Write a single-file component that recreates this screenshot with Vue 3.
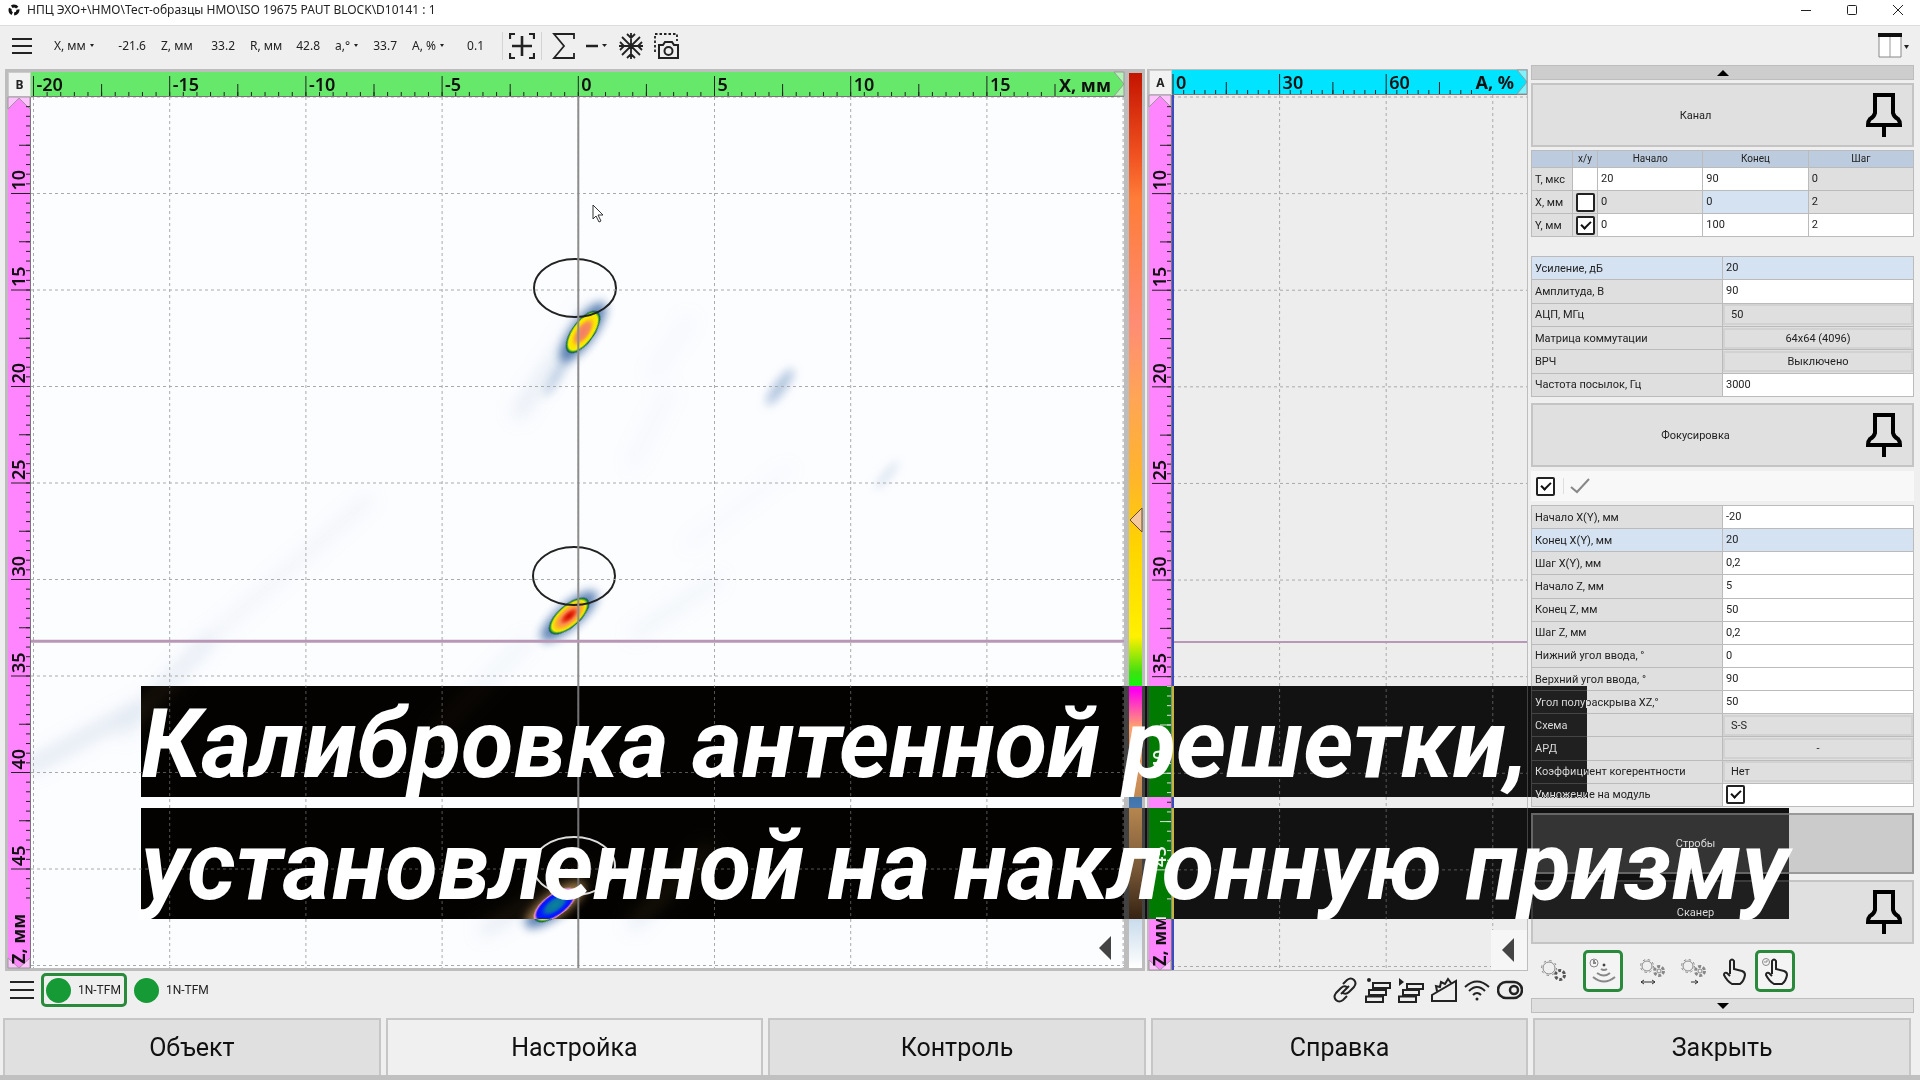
<script setup>
import { ref } from 'vue'

const readouts = ref([
  { label: 'X, мм', value: '-21.6', menu: true, size: 'w92' },
  { label: 'Z, мм', value: '33.2', menu: false, size: 'w74' },
  { label: 'R, мм', value: '42.8', menu: false, size: 'w70' },
  { label: 'a,°', value: '33.7', menu: true, size: 'w62' },
  { label: 'A, %', value: '0.1', menu: true, size: 'w72' }
])

const axes = ref([
  { id: 't', name: 'T, мкс', check: null, start: '20', end: '90', step: '0', off: ['step'] },
  { id: 'x', name: 'X, мм', check: false, start: '0', end: '0', step: '2', off: ['start', 'step'], sel: 'end' },
  { id: 'y', name: 'Y, мм', check: true, start: '0', end: '100', step: '2', off: [] }
])

const channel = ref([
  { name: 'Усиление, дБ', value: '20', type: 'text', active: true },
  { name: 'Амплитуда, В', value: '90', type: 'text' },
  { name: 'АЦП, МГц', value: '50', type: 'select' },
  { name: 'Матрица коммутации', value: '64x64 (4096)', type: 'button' },
  { name: 'ВРЧ', value: 'Выключено', type: 'button' },
  { name: 'Частота посылок, Гц', value: '3000', type: 'text' }
])

const focus = ref([
  { name: 'Начало X(Y), мм', value: '-20', type: 'text' },
  { name: 'Конец X(Y), мм', value: '20', type: 'text', active: true },
  { name: 'Шаг X(Y), мм', value: '0,2', type: 'text' },
  { name: 'Начало Z, мм', value: '5', type: 'text' },
  { name: 'Конец Z, мм', value: '50', type: 'text' },
  { name: 'Шаг Z, мм', value: '0,2', type: 'text' },
  { name: 'Нижний угол ввода, °', value: '0', type: 'text' },
  { name: 'Верхний угол ввода, °', value: '90', type: 'text' },
  { name: 'Угол полураскрыва XZ,°', value: '50', type: 'text' },
  { name: 'Схема', value: 'S-S', type: 'select' },
  { name: 'АРД', value: '-', type: 'button' },
  { name: 'Коэффициент когерентности', value: 'Нет', type: 'select' },
  { name: 'Умножение на модуль', value: true, type: 'check' }
])

const applyFocus = ref(true)
const tabs = ['Объект', 'Настройка', 'Контроль', 'Справка', 'Закрыть']
const activeTab = ref('Настройка')

function range(from, to, step) {
  const list = []
  for (let v = from; v <= to; v += step) list.push(v)
  return list
}

// axis value -> percent of the plot
const bx = v => ((v + 20) * 27.24 + 2.5) / 10.93 + '%'
const bz = v => ((v - 5) * 19.3) / 8.71 + '%'
const ax = v => (v * 3.553 + 1) / 3.55 + '%'
const az = v => ((v - 5) * 19.3 + 2) / 8.74 + '%'

const xMajor = range(-20, 15, 5)
const xMid = range(-17.5, 17.5, 5)
const xMinor = range(-19.5, 17, 0.5)
const zMajor = range(10, 45, 5)
const zMid = range(7.5, 42.5, 5)
const zMinor = range(5.5, 46.5, 0.5)
const aMajor = [0, 30, 60]
const aMid = [15, 45, 75]
const aMinor = range(3, 84, 3)

const blobs = [
  { x: 552, y: 235, angle: -54, hot: false },
  { x: 538, y: 519, angle: -41, hot: true },
  { x: 524, y: 808, angle: -36, hot: false }
]
</script>

<template>
  <div class="app">
    <header class="title">
      <svg class="logo" viewBox="0 0 12 12"><circle cx="6" cy="6" r="4" fill="none" stroke="#111" stroke-width="3" stroke-dasharray="6 2" /></svg>
      <span class="path">НПЦ ЭХО+\НМО\Тест-образцы НМО\ISO 19675 PAUT BLOCK\D10141 : 1</span>
      <div class="win">
        <button aria-label="Свернуть"><svg viewBox="0 0 12 12"><path d="M1 6.5h10" /></svg></button>
        <button aria-label="Развернуть"><svg viewBox="0 0 12 12"><rect x="1.500" y="1.500" width="9" height="9" rx="1" /></svg></button>
        <button aria-label="Выход"><svg viewBox="0 0 12 12"><path d="M1 1l10 10M11 1L1 11" /></svg></button>
      </div>
    </header>

    <div class="toolbar">
      <button class="menu" aria-label="Меню"><svg viewBox="0 0 20 18"><path d="M0 2h20M0 9h20M0 16h20" /></svg></button>
      <div class="readouts">
        <div v-for="r in readouts" :key="r.label" class="readout" :class="r.size">
          <span>{{ r.label }}<i v-if="r.menu" class="caret"></i></span>
          <span>{{ r.value }}</span>
        </div>
      </div>
      <div class="tools">
        <button class="sep" aria-label="Курсор"><svg width="26" height="28" viewBox="0 0 26 28"><path d="M1 7V2h5M20 2h5v5M25 21v5h-5M6 26H1v-5" stroke-width="2.200" /><path d="M13 4v20M3 14h20" stroke-width="2.600" /></svg></button>
        <button aria-label="Сумма"><svg width="24" height="28" viewBox="0 0 24 28"><path d="M22 7V2H2l10 12L2 26h20v-5" stroke-width="1.800" /></svg></button>
        <button aria-label="Линия"><svg width="22" height="28" viewBox="0 0 22 28"><path d="M0 14h12" stroke-width="2.500" /><path d="M16 12h5l-2.500 3z" fill="#222" stroke="none" /></svg></button>
        <button aria-label="Заморозить"><svg width="26" height="28" viewBox="0 0 26 28"><path d="M13 1v26M1 14h24M4 5l18 18M22 5L4 23M9 2l4 4 4-4M9 26l4-4 4 4M2 10l4 4-4 4M24 10l-4 4 4 4" stroke-width="1.800" /></svg></button>
        <button aria-label="Снимок"><svg width="26" height="28" viewBox="0 0 26 28"><path d="M1 20V2h22v7" stroke-dasharray="2.500 2" stroke-width="1.800" /><path d="M5 13h4l2-3h7l2 3h4v13H5z" stroke-width="2" /><circle cx="14.500" cy="19" r="4" stroke-width="2" /></svg></button>
      </div>
      <button class="layout" aria-label="Компоновка"><svg width="32" height="26" viewBox="0 0 32 26"><path d="M1 1h22v23H1z" fill="#fff" stroke="#888" /><path d="M12 3v21" stroke="#999" /><path d="M0 2h24" stroke="#111" stroke-width="4" /><path d="M26 12h5l-2.500 4z" fill="#222" stroke="none" /></svg></button>
    </div>

    <main class="main">
      <section class="work">
        <div class="views">
          <div class="frame bscan">
            <button class="corner">B</button>
            <svg class="ruler-x green">
              <line v-for="v in xMinor" :key="'n' + v" :x1="bx(v)" :x2="bx(v)" y1="20" y2="24" />
              <line v-for="v in xMid" :key="'m' + v" :x1="bx(v)" :x2="bx(v)" y1="12" y2="24" />
              <line v-for="v in xMajor" :key="'j' + v" :x1="bx(v)" :x2="bx(v)" y1="4" y2="24" />
              <svg v-for="v in xMajor" :key="v" :x="bx(v)" overflow="visible"><text x="3" y="19">{{ v }}</text></svg>
              <svg x="100%" overflow="visible"><path class="tip" d="M-10 0L0 12L-10 24H0V0z" /><text class="unit" x="-13" y="20" text-anchor="end">X, мм</text></svg>
            </svg>
            <svg class="ruler-z">
              <path class="tip" d="M0 0h22v12L11 1L0 12z" />
              <line v-for="v in zMinor" :key="'n' + v" :y1="bz(v)" :y2="bz(v)" x1="18" x2="22" />
              <line v-for="v in zMid" :key="'m' + v" :y1="bz(v)" :y2="bz(v)" x1="11" x2="22" />
              <line v-for="v in zMajor" :key="'j' + v" :y1="bz(v)" :y2="bz(v)" x1="3" x2="22" />
              <svg v-for="v in zMajor" :key="v" :y="bz(v)" overflow="visible"><text transform="rotate(-90)" x="3" y="17">{{ v }}</text></svg>
              <svg y="100%" overflow="visible"><path class="tip" d="M0 -10L11 0L22 -10V0H0z" /><text class="unit" transform="rotate(-90)" x="4" y="17">Z, мм</text></svg>
            </svg>
            <div class="plot white">
              <svg class="layer" viewBox="0 0 1093 871" preserveAspectRatio="none">
                <defs>
                  <filter id="soft" x="-50%" y="-50%" width="200%" height="200%"><feGaussianBlur stdDeviation="5" /></filter>
                  <filter id="haze" x="-50%" y="-50%" width="200%" height="200%"><feGaussianBlur stdDeviation="9" /></filter>
                  <radialGradient id="warm"><stop offset="0" stop-color="#f47a6c" /><stop offset=".4" stop-color="#f69052" /><stop offset=".65" stop-color="#ffe000" /><stop offset=".85" stop-color="#f4f000" /><stop offset=".94" stop-color="#108a30" /><stop offset="1" stop-color="#123c58" /></radialGradient>
                  <radialGradient id="hot"><stop offset="0" stop-color="#c80a00" /><stop offset=".22" stop-color="#e83010" /><stop offset=".45" stop-color="#fa8c50" /><stop offset=".65" stop-color="#ffb820" /><stop offset=".84" stop-color="#f4f000" /><stop offset=".94" stop-color="#108a30" /><stop offset="1" stop-color="#123c58" /></radialGradient>
                </defs>
                <g filter="url(#haze)" fill="none" stroke="#9db4d0">
                  <path d="M-5 672L110 610" stroke-width="10" opacity=".4" />
                  <path d="M110 610L180 540L340 400" stroke-width="9" opacity=".17" />
                  <path d="M90 640L180 540" stroke-width="14" opacity=".15" />
                  <path d="M485 320L560 210" stroke-width="12" opacity=".25" />
                  <path d="M655 450L760 370" stroke-width="7" opacity=".1" />
                  <path d="M450 835L560 770M600 830L680 750" stroke-width="10" opacity=".3" />
                  <path d="M400 640L500 540M600 540L690 480" stroke-width="10" opacity=".15" />
                  <path d="M620 280L660 220M600 370L640 290" stroke-width="12" opacity=".09" />
                </g>
                <g filter="url(#soft)">
                  <ellipse cx="749" cy="290" rx="22" ry="6" transform="rotate(-54 749 290)" fill="#7f9fc8" opacity=".6" />
                  <ellipse cx="856" cy="378" rx="18" ry="4" transform="rotate(-50 856 378)" fill="#9fb8d4" opacity=".35" />
                  <ellipse cx="527" cy="276" rx="26" ry="5" transform="rotate(-60 527 276)" fill="#7f9fc8" opacity=".45" />
                </g>
                <g v-for="b in blobs" :key="b.y" :transform="`translate(${b.x} ${b.y}) rotate(${b.angle})`">
                  <ellipse rx="36" ry="12" fill="#2c5c9c" opacity=".75" filter="url(#soft)" />
                  <ellipse rx="25" ry="11" :fill="b.hot ? 'url(#hot)' : 'url(#warm)'" />
                </g>
                <g class="marker">
                  <ellipse cx="544" cy="191" rx="41" ry="29" />
                  <ellipse cx="543" cy="479" rx="41" ry="29" />
                  <ellipse cx="543" cy="769" rx="41" ry="29" />
                </g>
              </svg>
              <svg class="layer grid">
                <line v-for="v in xMajor.concat(20)" :key="'x' + v" :x1="bx(v)" :x2="bx(v)" y1="0" y2="100%" />
                <line v-for="v in [5].concat(zMajor, 50)" :key="'z' + v" :y1="bz(v)" :y2="bz(v)" x1="0" x2="100%" />
                <line class="cross" :x1="bx(0)" :x2="bx(0)" y1="0" y2="100%" />
                <line class="level" :y1="bz(33.2)" :y2="bz(33.2)" x1="0" x2="100%" />
              </svg>
              <svg class="pointer" viewBox="0 0 12 19"><path d="M1 1v14l3-3 3 6 2-1-3-6h5z" fill="#fff" stroke="#333" /></svg>
              <button class="fold" aria-label="Панель"></button>
            </div>
          </div>

          <div class="palette">
            <div class="bar"></div>
            <svg class="thumb" viewBox="0 0 14 26"><path d="M1 13L13 1v24z" fill="#f5c9a0" stroke="#6b4a20" /></svg>
          </div>

          <div class="frame ascan">
            <button class="corner">A</button>
            <svg class="ruler-x cyan">
              <line v-for="v in aMinor" :key="'n' + v" :x1="ax(v)" :x2="ax(v)" y1="20" y2="24" />
              <line v-for="v in aMid" :key="'m' + v" :x1="ax(v)" :x2="ax(v)" y1="12" y2="24" />
              <line v-for="v in aMajor" :key="'j' + v" :x1="ax(v)" :x2="ax(v)" y1="4" y2="24" />
              <svg v-for="v in aMajor" :key="v" :x="ax(v)" overflow="visible"><text x="3" y="19">{{ v }}</text></svg>
              <svg x="100%" overflow="visible"><path class="tip" d="M-10 0L0 12L-10 24H0V0z" /><text class="unit" x="-13" y="19" text-anchor="end">A, %</text></svg>
            </svg>
            <svg class="ruler-z">
              <path class="tip" d="M0 0h22v12L11 1L0 12z" />
              <line v-for="v in zMinor" :key="'n' + v" :y1="az(v)" :y2="az(v)" x1="18" x2="22" />
              <line v-for="v in zMid" :key="'m' + v" :y1="az(v)" :y2="az(v)" x1="11" x2="22" />
              <line v-for="v in zMajor" :key="'j' + v" :y1="az(v)" :y2="az(v)" x1="3" x2="22" />
              <svg v-for="v in zMajor" :key="v" :y="az(v)" overflow="visible"><text transform="rotate(-90)" x="3" y="17">{{ v }}</text></svg>
              <svg y="100%" overflow="visible"><path class="tip" d="M0 -10L11 0L22 -10V0H0z" /><text class="unit" transform="rotate(-90)" x="4" y="17">Z, мм</text></svg>
            </svg>
            <div class="plot gray">
              <svg class="layer grid">
                <line v-for="v in [30, 60, 90]" :key="'x' + v" :x1="ax(v)" :x2="ax(v)" y1="0" y2="100%" />
                <line v-for="v in [5].concat(zMajor, 50)" :key="'z' + v" :y1="az(v)" :y2="az(v)" x1="0" x2="100%" />
                <line class="level thin" :y1="az(33.2)" :y2="az(33.2)" x1="0" x2="100%" />
                <line class="signal" x1="1" x2="1" y1="0" y2="100%" />
              </svg>
              <button class="fold lit" aria-label="Панель"></button>
            </div>
          </div>
        </div>

        <div class="status">
          <button class="menu" aria-label="Список"><svg viewBox="0 0 24 20"><path d="M0 2h24M0 10h24M0 18h24" /></svg></button>
          <button class="chip on"><i class="dot"></i>1N-TFM</button>
          <button class="chip"><i class="dot"></i>1N-TFM</button>
          <div class="icons">
            <button aria-label="Связь"><svg viewBox="0 0 26 26"><path d="M11 7l4-4q4-3 7 0t0 7l-5 5q-3 3-6 1M15 19l-4 4q-4 3-7 0t0-7l5-5q3-3 6-1M9 17l8-8" /></svg></button>
            <button aria-label="Слои"><svg viewBox="0 0 26 26"><path d="M8 6h17v5H8zM4 13h17v5H4zM1 19.500h17V25H1zM8 11v2M4 18v2" /><circle cx="4" cy="3" r="2" class="solid" /></svg></button>
            <button aria-label="Слои далее"><svg viewBox="0 0 26 26"><path d="M9 7h16v5H9zM5 13h16v5H5zM1 19.500h17V25H1z" /><path d="M1 1l5 4-5 4z" class="solid" /></svg></button>
            <button aria-label="Профиль"><svg viewBox="0 0 26 26"><path d="M1 24v-6L25 4v20zM6 14l-1-5 4 1 1-5 4 2 3-5 3 4" /></svg></button>
            <button aria-label="Сеть"><svg viewBox="0 0 26 26"><path d="M1 10q12-11 24 0M5 14q8-8 16 0M9 18q4-4 8 0" /><circle cx="13" cy="22" r="1.500" class="solid" /></svg></button>
            <button aria-label="Переключатель"><svg viewBox="0 0 26 26"><rect x="1" y="5" width="24" height="16" rx="8" stroke-width="2.500" /><circle cx="17" cy="13" r="4" stroke-width="2.500" /></svg></button>
          </div>
        </div>
      </section>

      <aside class="side">
        <button class="scroll up" aria-label="Вверх"><i></i></button>
        <button class="group">
          <span>Канал</span>
          <svg viewBox="0 0 36 44"><path d="M9 2h18v18q1 4 5 6 2 2 2 6H2q0-4 2-6 4-2 5-6zM18 32v12" /></svg>
        </button>

        <table class="axes">
          <thead>
            <tr><th class="c1"></th><th class="c2">x/y</th><th>Начало</th><th>Конец</th><th>Шаг</th></tr>
          </thead>
          <tbody>
            <tr v-for="a in axes" :key="a.id">
              <td class="name">{{ a.name }}</td>
              <td :class="{ off: a.check !== null }"><input v-if="a.check !== null" v-model="a.check" type="checkbox" :aria-label="a.name" /></td>
              <td v-for="k in ['start', 'end', 'step']" :key="k" :class="{ off: a.off.includes(k), sel: a.sel === k }">
                <input v-model="a[k]" type="text" :aria-label="a.name + ' ' + k" />
              </td>
            </tr>
          </tbody>
        </table>

        <table class="props channel">
          <tbody>
            <tr v-for="(p, i) in channel" :key="p.name" :class="{ active: p.active }">
              <td class="name"><label :for="'c' + i">{{ p.name }}</label></td>
              <td :class="{ off: p.type !== 'text' }">
                <input v-if="p.type === 'text'" :id="'c' + i" v-model="p.value" type="text" />
                <select v-else-if="p.type === 'select'" :id="'c' + i" v-model="p.value"><option>{{ p.value }}</option></select>
                <button v-else :id="'c' + i">{{ p.value }}</button>
              </td>
            </tr>
          </tbody>
        </table>

        <button class="group">
          <span>Фокусировка</span>
          <svg viewBox="0 0 36 44"><path d="M9 2h18v18q1 4 5 6 2 2 2 6H2q0-4 2-6 4-2 5-6zM18 32v12" /></svg>
        </button>

        <div class="apply">
          <input v-model="applyFocus" type="checkbox" aria-label="Включить фокусировку" />
          <button aria-label="Применить"><svg viewBox="0 0 20 16"><path d="M1 9l6 5L19 1" /></svg></button>
        </div>

        <table class="props focus">
          <tbody>
            <tr v-for="(p, i) in focus" :key="p.name" :class="{ active: p.active }">
              <td class="name"><label :for="'f' + i">{{ p.name }}</label></td>
              <td :class="{ off: p.type === 'select' || p.type === 'button' }">
                <input v-if="p.type === 'text'" :id="'f' + i" v-model="p.value" type="text" />
                <input v-else-if="p.type === 'check'" :id="'f' + i" v-model="p.value" type="checkbox" />
                <select v-else-if="p.type === 'select'" :id="'f' + i" v-model="p.value"><option>{{ p.value }}</option></select>
                <button v-else :id="'f' + i">{{ p.value }}</button>
              </td>
            </tr>
          </tbody>
        </table>

        <button class="group dark"><span>Стробы</span></button>
        <button class="group">
          <span>Сканер</span>
          <svg viewBox="0 0 36 44"><path d="M9 2h18v18q1 4 5 6 2 2 2 6H2q0-4 2-6 4-2 5-6zM18 32v12" /></svg>
        </button>

        <div class="scanner">
          <button aria-label="Настройки"><svg viewBox="0 0 28 28"><circle class="gear" cx="9" cy="11" r="6" /><circle class="gear" cx="9" cy="11" r="7.500" stroke-dasharray="2.500 3.400" /><circle class="gear dk" cx="20" cy="18" r="4.500" stroke-dasharray="3 1.700" stroke-width="3" /></svg></button>
          <button class="on" aria-label="Излучение"><svg viewBox="0 0 28 28"><circle class="gear" cx="5" cy="6" r="4" /><path class="gear" d="M5 3v3h2M12 12q3 2 6 0M8 16q7 5 13 0M4 20q11 9 22 0" stroke-width="2" /><circle cx="15" cy="8" r="1" fill="#888" /></svg></button>
          <button aria-label="Шаг"><svg viewBox="0 0 28 28"><circle class="gear" cx="9" cy="9" r="5" /><circle class="gear" cx="9" cy="9" r="6.500" stroke-dasharray="2.500 2.600" /><circle class="gear" cx="21" cy="14" r="4.500" stroke-dasharray="3 1.700" stroke-width="3" /><circle cx="21" cy="14" r="2" class="gear" fill="#eee" /><path d="M3 25h14M6 23l-3 2 3 2M14 23l3 2-3 2" stroke="#333" /></svg></button>
          <button aria-label="Далее"><svg viewBox="0 0 28 28"><circle class="gear" cx="9" cy="9" r="5" /><circle class="gear" cx="9" cy="9" r="6.500" stroke-dasharray="2.500 2.600" /><circle class="gear" cx="21" cy="14" r="4.500" stroke-dasharray="3 1.700" stroke-width="3" /><circle cx="21" cy="14" r="2" class="gear" fill="#eee" /><path d="M12 25h7M16 23l3 2-3 2" stroke="#333" /></svg></button>
          <button aria-label="Рука"><svg viewBox="0 0 28 28"><path class="hand" d="M10 17V4q2-3 4 0v8l8 2q3 1 3 4-1 6-5 9h-8q-5-3-8-9 0-3 3-2l3 3" /></svg></button>
          <button class="on" aria-label="Рука с таймером"><svg viewBox="0 0 28 28"><circle class="gear" cx="5" cy="5" r="3.500" /><path class="gear" d="M3 5h3v-2" /><path class="hand" d="M11 17V4q2-3 4 0v8l8 2q3 1 3 4-1 6-5 9h-8q-5-3-8-9 0-3 3-2l3 3" /></svg></button>
        </div>
        <button class="scroll down" aria-label="Вниз"><i></i></button>
      </aside>
    </main>

    <nav class="tabs">
      <button v-for="t in tabs" :key="t" :class="{ active: t === activeTab }" @click="activeTab = t">{{ t }}</button>
    </nav>

    <div class="caption">
      <p class="first">Калибровка антенной решетки,</p>
      <p>установленной на наклонную призму</p>
    </div>
  </div>
</template>

<style>
body {
  margin: 0;
  background: #efefef;
}
</style>

<style scoped>
.app {
  position: relative;
  display: flex;
  flex-direction: column;
  min-height: 100vh;
  box-sizing: border-box;
  background: #efefef;
  border-bottom: 5px solid #c0c0c0;
  font-family: Roboto, sans-serif;
  font-size: 12px;
  color: #222;
  overflow: hidden;
}

button {
  padding: 0;
  margin: 0;
  border: none;
  background: none;
  font: inherit;
  color: inherit;
}

svg {
  display: block;
  fill: none;
  stroke: #222;
}

.title {
  display: flex;
  align-items: center;
  height: 26px;
  padding: 0 16px 6px 8px;
  box-sizing: border-box;
  background: #fff;
  border-bottom: 1px solid #ddd;
}
.logo {
  width: 12px;
  height: 12px;
  margin-right: 7px;
}
.path {
  font-family: "Noto Sans", sans-serif;
  font-size: 12px;
}
.win {
  display: flex;
  gap: 34px;
  margin-left: auto;
}
.win svg {
  width: 12px;
  height: 12px;
}

.toolbar {
  display: flex;
  align-items: center;
  height: 39px;
  padding: 0 10px 0 12px;
}
.toolbar .menu svg {
  width: 20px;
  height: 18px;
  stroke-width: 2;
}
.readouts {
  display: flex;
  gap: 15px;
  margin-left: 22px;
  font-family: "Noto Sans", sans-serif;
  font-size: 12px;
}
.readout {
  display: flex;
  justify-content: space-between;
  white-space: nowrap;
}
.w92 { width: 92px; }
.w74 { width: 74px; }
.w70 { width: 70px; }
.w62 { width: 62px; }
.w72 { width: 72px; }
.caret {
  display: inline-block;
  margin-left: 4px;
  vertical-align: middle;
  border: 2px solid transparent;
  border-top: 3px solid #222;
}
.tools {
  display: flex;
  align-items: center;
  gap: 10px;
  margin-left: 18px;
}
.tools .sep {
  padding: 0 6px;
  border-left: 1px solid #d4d4d4;
  border-right: 1px solid #d4d4d4;
}
.layout {
  margin-left: auto;
}

.main {
  display: grid;
  grid-template-columns: minmax(0, 1fr) 383px;
  column-gap: 3px;
  flex: 1;
  padding-right: 6px;
}
.work {
  display: flex;
  flex-direction: column;
  padding: 4px 0 0 5px;
}
.views {
  display: grid;
  grid-template-columns: minmax(0, 1120fr) 22px minmax(0, 381fr);
  flex: 1;
}
.frame {
  display: grid;
  background: #c8c8c8;
}
.bscan {
  grid-template: 25px 1fr / 23px 1fr;
  border: solid #bdbdbd;
  border-width: 3px 1px 3px 3px;
}
.ascan {
  grid-template: 25px 1fr / 23px 1fr;
  border: solid #bdbdbd;
  border-width: 1px 1px 1px 2px;
}
.corner {
  background: #f2f2f2;
  border: 1px solid #ccc;
  font-family: "Noto Sans", sans-serif;
  font-weight: 700;
  font-size: 12px;
}
.ruler-x,
.ruler-z {
  width: 100%;
  height: 100%;
  overflow: visible;
  box-sizing: border-box;
}
.green { background: #66e86b; }
.cyan { background: #00e4ff; }
.ruler-x { border-bottom: 1px solid #777; }
.ruler-z {
  background: #ff85ff;
  border-right: 1px solid #777;
}
.ruler-x line,
.ruler-z line {
  stroke: #222;
  stroke-width: 1;
}
.frame text {
  fill: #111;
  stroke: none;
  font-family: "Noto Sans", sans-serif;
  font-size: 18px;
  font-weight: 600;
}
.frame .unit {
  font-weight: 700;
}
.tip {
  fill: rgba(255, 255, 255, 0.5);
  stroke: #999;
}

.plot {
  position: relative;
}
.white { background: #fcfdff; }
.gray { background: #ededed; }
.layer {
  position: absolute;
  inset: 0;
  width: 100%;
  height: 100%;
}
.layer > g > ellipse {
  stroke: none;
}
.layer .marker ellipse {
  stroke: #222;
  stroke-width: 2;
}
.grid line {
  stroke: #aaa;
  stroke-dasharray: 3 3;
}
.grid .cross {
  stroke: #8c8c8c;
  stroke-width: 2;
  stroke-dasharray: none;
}
.grid .level {
  stroke: #b898b6;
  stroke-width: 3;
  stroke-dasharray: none;
}
.grid .thin {
  stroke-width: 2;
}
.grid .signal {
  stroke: #3c4cc0;
  stroke-width: 2;
  stroke-dasharray: none;
}
.pointer {
  position: absolute;
  left: 51.300%;
  top: 12.300%;
  width: 12px;
  height: 19px;
}
.fold {
  position: absolute;
  right: 0;
  bottom: 0;
  width: 36px;
  height: 40px;
}
.fold::before {
  content: "";
  position: absolute;
  left: 11px;
  top: 8px;
  border: 12px solid transparent;
  border-left: none;
  border-right-color: #444;
}
.lit {
  background: #f6f6f6;
}

.palette {
  position: relative;
  display: flex;
  padding: 4px 3px 3px 4px;
  background: #bdbdbd;
  border-right: 2px solid #efefef;
}
.bar {
  flex: 1;
  background: linear-gradient(#c41400 0%, #f05020 9%, #ff7c38 14%, #ff8c74 28%, #ffa458 36%, #ffb42c 45%, #ffd400 53%, #fff000 63%, #40e010 67%, #00ff10 69%, #005f90 73%, #4878b0 82%, #88a8c8 89%, #c4d8ea 94%, #fff 100%);
}
.thumb {
  position: absolute;
  left: 4px;
  top: 48.600%;
  width: 14px;
  height: 26px;
}

.status {
  display: flex;
  align-items: center;
  height: 42px;
  padding: 0 5px 4px 4px;
  box-sizing: border-box;
}
.status .menu svg {
  width: 26px;
  height: 20px;
  stroke-width: 2;
}
.chip {
  display: flex;
  align-items: center;
  gap: 7px;
  height: 34px;
  padding: 0 4px 0 3px;
  border: 2px solid transparent;
  border-radius: 5px;
  box-sizing: border-box;
  margin-right: 2px;
}
.chip.on {
  margin-left: 6px;
  border-color: #2a8a3c;
  border-width: 3px;
  padding: 0 3px 0 2px;
}
.dot {
  width: 25px;
  height: 25px;
  border-radius: 50%;
  background: #169a36;
}
.icons {
  display: flex;
  gap: 7px;
  margin-left: auto;
}
.icons svg {
  width: 26px;
  height: 26px;
  stroke-width: 2;
}
.solid {
  fill: #222;
  stroke: none;
}

.side {
  display: flex;
  flex-direction: column;
  font-size: 11px;
}
.scroll {
  display: flex;
  align-items: center;
  justify-content: center;
  height: 15px;
  border: 1px solid #bdbdbd;
}
.scroll i {
  border: 6px solid transparent;
}
.up {
  background: #cdcdcd;
  margin-bottom: 3px;
}
.up i {
  border-top: none;
  border-bottom-color: #000;
}
.down {
  background: #dfdfdf;
}
.down i {
  border-bottom: none;
  border-top-color: #000;
}
.group {
  display: flex;
  align-items: center;
  height: 64px;
  border: 2px solid #c4c4c4;
  background: #e0e0e0;
}
.group span {
  flex: 1;
}
.group svg {
  width: 36px;
  height: 44px;
  margin: 0 10px 0 8px;
  stroke: #000;
  stroke-width: 4;
}
.dark {
  height: 61px;
  margin: 6px 0;
  padding-right: 54px;
  background: #cbcbcb;
  border-color: #999;
}

table {
  width: 100%;
  border-collapse: collapse;
  table-layout: fixed;
}
td,
th {
  height: 23px;
  padding: 0;
  box-sizing: border-box;
  border: 1px solid #bbb;
  background: #fff;
}
th {
  height: 17px;
  background: #bccbdd;
  font-size: 10px;
  font-weight: 400;
  line-height: 14px;
}
.c1 { width: 41px; }
.c2 { width: 25px; }
.axes {
  margin: 3px 0 19px;
}
td.name {
  padding-left: 3px;
  background: #dfdfdf;
  white-space: nowrap;
}
td.off { background: #dfdfdf; }
td.sel { background: #d4e2f2; }
.props .name { width: 50%; }
.channel {
  height: 141px;
  margin-bottom: 6px;
}
.focus { height: 302px; }
.active td,
.active td.name {
  background: #d4e2f2;
}
td input[type="text"] {
  display: block;
  width: 100%;
  padding: 0 0 0 3px;
  border: none;
  box-sizing: border-box;
  background: transparent;
  font: inherit;
  line-height: 20px;
  color: #222;
  outline: none;
}
td select,
td button {
  display: block;
  width: 100%;
  height: 21px;
  border: 2px solid #d2d2d2;
  box-sizing: border-box;
  background: #dfdfdf;
  font: inherit;
  color: #222;
  appearance: none;
}
td select {
  padding: 0 6px;
}
input[type="checkbox"] {
  appearance: none;
  display: block;
  width: 19px;
  height: 19px;
  margin: 0 3px;
  border: 2px solid #222;
  border-radius: 2px;
  box-sizing: border-box;
  background: #fff;
}
input[type="checkbox"]:checked::before {
  content: "";
  display: block;
  width: 8px;
  height: 4px;
  margin: 3px 0 0 3px;
  border: solid #111;
  border-width: 0 0 2px 2px;
  transform: rotate(-45deg);
}
.apply {
  display: flex;
  align-items: center;
  height: 30px;
  margin: 4px 0;
  padding-left: 2px;
  background: #f8f8f8;
}
.apply button {
  margin-left: 5px;
  padding-left: 6px;
  border-left: 1px solid #ddd;
}
.apply svg {
  width: 20px;
  height: 16px;
  stroke: #888;
  stroke-width: 2;
}

.scanner {
  display: flex;
  align-items: center;
  height: 54px;
  gap: 1px;
  padding-left: 3px;
}
.scanner button {
  display: flex;
  align-items: center;
  justify-content: center;
  width: 40px;
  height: 42px;
  box-sizing: border-box;
}
.scanner .on {
  border: 3px solid #2a8a3c;
  border-radius: 5px;
  background: #f4f4f4;
}
.scanner button:first-child {
  margin-right: 8px;
}
.scanner button:nth-child(2) {
  margin-right: 8px;
}
.scanner svg {
  width: 28px;
  height: 28px;
}
.gear { stroke: #888; }
.dk { stroke: #555; }
.hand { stroke-width: 2; }

.tabs {
  display: grid;
  grid-template-columns: repeat(5, 1fr);
  gap: 5px;
  padding: 5px 9px 0 3px;
}
.tabs button {
  height: 57px;
  background: #e0e0e0;
  border: 2px solid #c6c6c6;
  border-bottom: none;
  font-size: 25px;
  color: #111;
}
.tabs .active {
  background: #f0f0f0;
}

/* subtitle lying over the program window, negative of what is below */
.caption {
  position: absolute;
  left: 141px;
  top: 686px;
  display: flex;
  flex-direction: column;
  align-items: flex-start;
  gap: 11px;
}
.caption p {
  margin: 0;
  padding-top: 6px;
  backdrop-filter: invert(1);
  font-family: Roboto, "Noto Sans", sans-serif;
  font-size: 96px;
  font-weight: 700;
  font-style: italic;
  line-height: 105px;
  color: #fff;
  white-space: nowrap;
}
.caption .first {
  padding-right: 58px;
}
</style>
